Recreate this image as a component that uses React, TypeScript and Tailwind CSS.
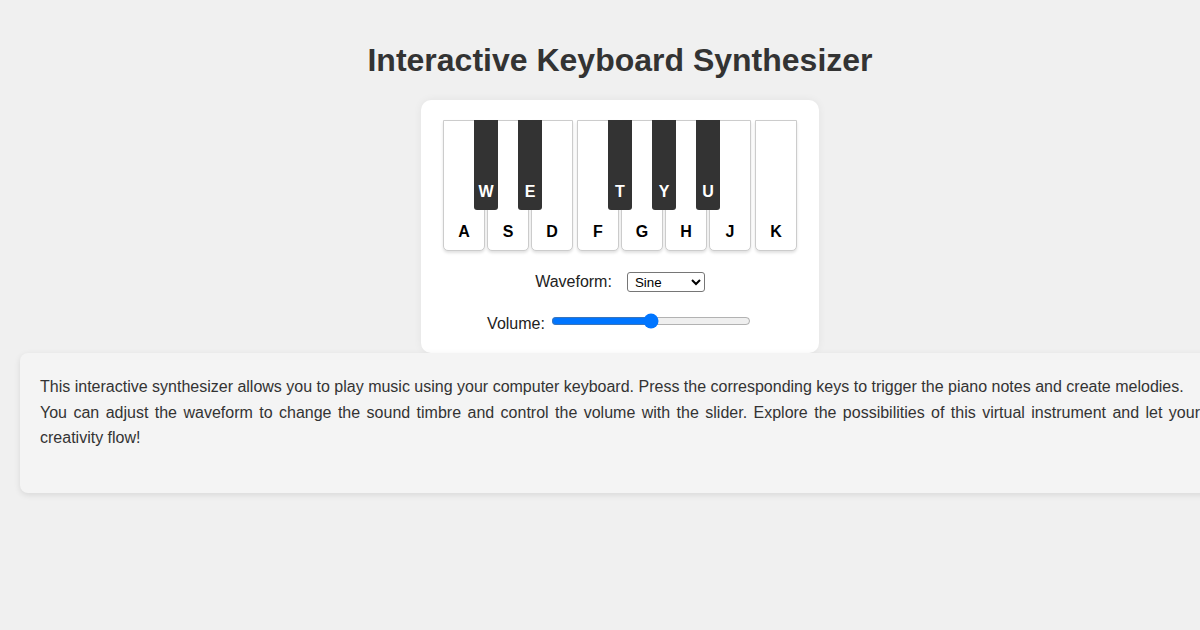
import { useState } from "react";

type WhiteKey = { label: string; extra?: boolean };
type BlackKey = { label: string; left: string };

const whiteKeys: WhiteKey[] = [
  { label: "A" },
  { label: "S" },
  { label: "D" },
  { label: "F", extra: true },
  { label: "G" },
  { label: "H" },
  { label: "J" },
  { label: "K", extra: true },
];

const blackKeys: BlackKey[] = [
  { label: "W", left: "left-[33px]" },
  { label: "E", left: "left-[77px]" },
  { label: "T", left: "left-[167px]" },
  { label: "Y", left: "left-[211px]" },
  { label: "U", left: "left-[255px]" },
];

export default function App() {
  const [waveform, setWaveform] = useState("sine");
  const [volume, setVolume] = useState(0.5);

  return (
    <div className="min-h-screen overflow-hidden bg-[#f0f0f0] p-5 font-['Liberation_Sans',Arial,sans-serif] text-[#333]">
      <div className="w-[1200px]">
        <h1 className="mt-[21.5px] mb-[21.5px] text-center text-[32px] font-bold leading-[37px] text-[#333]">
          Interactive Keyboard Synthesizer
        </h1>

        <div className="mx-auto w-[398px] rounded-[10px] bg-white px-5 pt-5 pb-[22px] shadow-[0_0_8px_rgba(0,0,0,0.06)]">
          <div className="relative flex h-[131px] justify-center">
            {whiteKeys.map((key) => (
              <div
                key={key.label}
                className={`flex h-[131px] w-[42px] flex-col items-center justify-end rounded-b-[5px] border border-[#ccc] bg-white pb-[9px] text-base font-bold leading-[18px] text-black shadow-[0_2px_3px_rgba(0,0,0,0.12)] ${
                  key.extra ? "ml-[3px] mr-px" : "mx-px"
                }`}
              >
                {key.label}
              </div>
            ))}
            {blackKeys.map((key) => (
              <div
                key={key.label}
                className={`absolute top-0 flex h-[90px] w-[24px] flex-col items-center justify-end rounded-b-[3px] bg-[#333] pb-[9px] text-base font-bold leading-[18px] text-white ${key.left}`}
              >
                {key.label}
              </div>
            ))}
          </div>

          <div className="mt-[21px] flex h-5 items-center justify-center gap-[15px] text-base text-[#222]">
            <span>Waveform:</span>
            <select
              value={waveform}
              onChange={(e) => setWaveform(e.target.value)}
              className="h-[20px] w-[78px] rounded-[3px] border border-[#767676] bg-white pl-[3px] text-[13.33px] text-black"
            >
              <option value="sine">Sine</option>
              <option value="square">Square</option>
              <option value="sawtooth">Sawtooth</option>
              <option value="triangle">Triangle</option>
            </select>
          </div>

          <div className="mt-[19px] flex h-5 items-center justify-center gap-1 text-base text-[#222]">
            <span className="translate-y-[3px]">Volume:</span>
            <input
              type="range"
              min={0}
              max={1}
              step={0.01}
              value={volume}
              onChange={(e) => setVolume(Number(e.target.value))}
              className="mx-[2px] w-[200px] accent-[#0075ff]"
            />
          </div>
        </div>

        <div className="min-h-[140px] w-[1200px] rounded-lg bg-[#f4f4f4] px-5 pt-[21px] pb-5 shadow-[0_2px_6px_rgba(0,0,0,0.1)]">
          <p className="text-justify text-base leading-[25.6px] text-[#333]">
            This interactive synthesizer allows you to play music using your
            computer keyboard. Press the corresponding keys to trigger the
            piano notes and create melodies.
            <br />
            You can adjust the waveform to change the sound timbre and control
            the volume with the slider. Explore the possibilities of this
            virtual instrument and let your creativity flow!
          </p>
        </div>
      </div>
    </div>
  );
}
